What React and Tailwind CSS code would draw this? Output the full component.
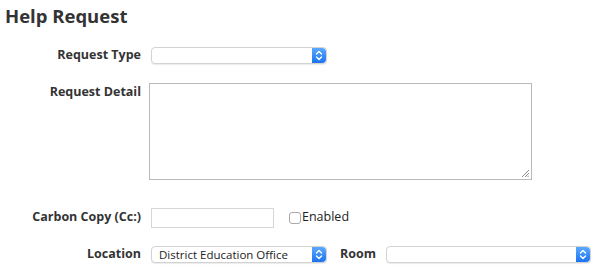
import React from 'react';

function Stepper() {
  return (
    <span className="flex h-full w-[14px] items-center justify-center rounded-r-[4px] bg-gradient-to-b from-[#5aa8ff] to-[#1a73f0]">
      <svg width="8" height="11" viewBox="0 0 8 11" fill="none" stroke="white" strokeWidth="1.4" strokeLinecap="round" strokeLinejoin="round">
        <path d="M1.5 4 L4 1.5 L6.5 4" />
        <path d="M1.5 7 L4 9.5 L6.5 7" />
      </svg>
    </span>
  );
}

function Select({ width, value }) {
  return (
    <div
      className={`flex h-[17px] items-stretch rounded-[4px] border border-[#d3d3d3] bg-white shadow-[0_1px_1px_rgba(0,0,0,0.08)] ${width}`}
    >
      <span className="flex-1 truncate pl-[7px] text-[11.5px] leading-[15px] text-[#222]">{value}</span>
      <Stepper />
    </div>
  );
}

function Label({ children, className = '' }) {
  return (
    <div className={`w-[141px] shrink-0 text-right text-[12.5px] font-bold text-[#333] ${className}`}>
      {children}
    </div>
  );
}

export default function App() {
  return (
    <div className="h-[278px] w-[600px] bg-white font-['Open_Sans',sans-serif]">
      <h1 className="pl-[5px] pt-[3px] text-[18.5px] font-bold leading-[26px] text-[#333]">Help Request</h1>

      <div className="mt-[17px] flex items-center">
        <Label>Request Type</Label>
        <div className="ml-[10px]">
          <Select width="w-[176px]" value="" />
        </div>
      </div>

      <div className="mt-[18px] flex items-start">
        <Label className="pt-[1px] leading-[16px]">Request Detail</Label>
        <div className="relative ml-[8px] h-[97px] w-[383px] border border-[#b9b9b9] bg-white">
          <svg className="absolute bottom-[2px] right-[2px]" width="8" height="8" viewBox="0 0 8 8" stroke="#888" strokeWidth="1">
            <path d="M8 1 L1 8 M8 4 L4 8 M8 6.5 L6.5 8" />
          </svg>
        </div>
      </div>

      <div className="mt-[28px] flex items-center">
        <Label>Carbon Copy (Cc:)</Label>
        <div className="ml-[10px] h-[20px] w-[123px] border border-[#d6d6d6] bg-white" />
        <label className="ml-[15px] flex items-center text-[12.5px] text-[#222]">
          <span className="mr-[1px] h-[12px] w-[12px] rounded-[3px] border border-[#a8a8a8] bg-white" />
          Enabled
        </label>
      </div>

      <div className="mt-[17px] flex items-center">
        <Label>Location</Label>
        <div className="ml-[10px]">
          <Select width="w-[176px]" value="District Education Office" />
        </div>
        <div className="ml-[13px] text-[12.5px] font-bold text-[#333]">Room</div>
        <div className="ml-[10px]">
          <Select width="w-[205px]" value="" />
        </div>
      </div>
    </div>
  );
}
